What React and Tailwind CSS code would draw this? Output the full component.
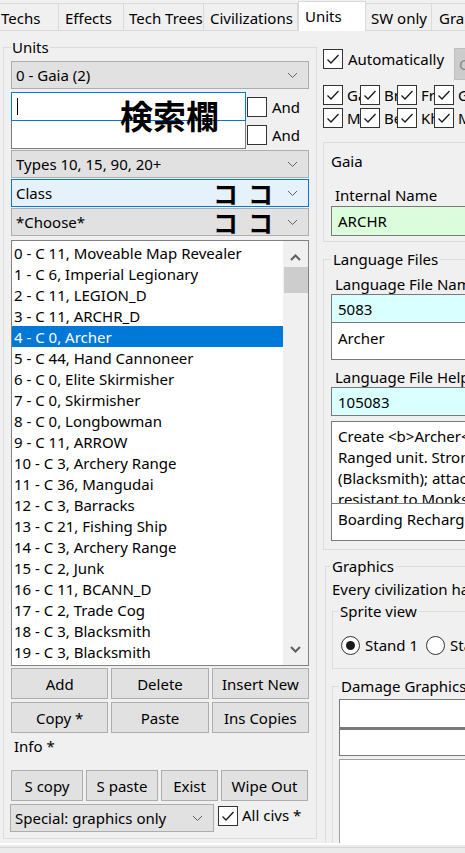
const units = [
  '0 - C 11, Moveable Map Revealer',
  '1 - C 6, Imperial Legionary',
  '2 - C 11, LEGION_D',
  '3 - C 11, ARCHR_D',
  '4 - C 0, Archer',
  '5 - C 44, Hand Cannoneer',
  '6 - C 0, Elite Skirmisher',
  '7 - C 0, Skirmisher',
  '8 - C 0, Longbowman',
  '9 - C 11, ARROW',
  '10 - C 3, Archery Range',
  '11 - C 36, Mangudai',
  '12 - C 3, Barracks',
  '13 - C 21, Fishing Ship',
  '14 - C 3, Archery Range',
  '15 - C 2, Junk',
  '16 - C 11, BCANN_D',
  '17 - C 2, Trade Cog',
  '18 - C 3, Blacksmith',
  '19 - C 3, Blacksmith',
];

const tabs = [
  { label: 'Techs', w: 'w-[61px]', pl: 'pl-[2px]' },
  { label: 'Effects', w: 'w-[66px]', pl: 'pl-[6px]' },
  { label: 'Tech Trees', w: 'w-[81px]', pl: 'pl-[5px]' },
  { label: 'Civilizations', w: 'w-[95px]', pl: 'pl-[6px]' },
  { label: 'Units', w: 'w-[68px]', pl: 'pl-[6px]', active: true },
  { label: 'SW only', w: 'w-[67px]', pl: 'pl-[5px]' },
  { label: 'Graphics', w: 'w-[80px]', pl: 'pl-[7px]' },
];

function Chevron() {
  return (
    <svg width="11" height="7" viewBox="0 0 11 7" className="shrink-0">
      <path d="M1 1 L5.5 5.5 L10 1" fill="none" stroke="#606060" strokeWidth="1" />
    </svg>
  );
}

function Check({ checked = true }) {
  return (
    <div className="w-[20px] h-[20px] shrink-0 border border-[#333333] bg-white flex items-center justify-center">
      {checked && (
        <svg width="16" height="16" viewBox="0 0 16 16">
          <path d="M2.5 8.5 L6 12 L13.5 4" fill="none" stroke="#1a1a1a" strokeWidth="1.3" />
        </svg>
      )}
    </div>
  );
}

function Select({ children, active, className = '' }) {
  return (
    <div
      className={`relative h-[28px] flex items-center justify-between pl-[4px] pr-[10px] border ${
        active ? 'bg-[#e5f1fb] border-[#0078d7]' : 'bg-[#e1e1e1] border-[#adadad]'
      } ${className}`}
    >
      <span className="whitespace-nowrap">{children}</span>
      <Chevron />
    </div>
  );
}

function Btn({ children, className = '' }) {
  return (
    <div className={`h-[31px] flex items-center justify-center bg-[#e1e1e1] border border-[#adadad] ${className}`}>
      {children}
    </div>
  );
}

function Note({ className = '' }) {
  return (
    <span
      className={`absolute font-bold text-[25px] leading-none tracking-[10px] text-black ${className}`}
      style={{ fontFamily: '"Noto Sans CJK JP", sans-serif' }}
    >
      ココ
    </span>
  );
}

export default function App() {
  return (
    <div
      className="w-[465px] h-[853px] overflow-hidden bg-[#f0f0f0] text-[15px] text-black leading-[20px]"
      style={{ fontFamily: '"Noto Sans", "Noto Sans CJK JP", sans-serif' }}
    >
      {/* Tabs */}
      <div className="h-[31px] flex items-end border-b border-[#d9d9d9] -ml-[1px] bg-[#f0f0f0]">
        {tabs.map(t => (
          <div
            key={t.label}
            className={`shrink-0 ${t.w} ${t.pl} flex items-center whitespace-nowrap border-t border-l border-r ${
              t.active
                ? 'h-[30px] -mb-px bg-white border-[#d9d9d9] pb-[2px]'
                : 'h-[27px] bg-[#f0f0f0] border-[#dadada] -ml-px pt-[1px]'
            }`}
          >
            {t.label}
          </div>
        ))}
      </div>

      {/* Body */}
      <div className="flex h-[812px]">
        {/* Left column */}
        <div className="w-[317px] shrink-0 pl-[3px]">
          <fieldset className="mt-[6px] h-[802px] border border-[#dcdcdc] px-[7px]">
            <legend className="px-[1px] leading-[20px]">Units</legend>

            <Select className="mt-[4px]">0 - Gaia (2)</Select>

            {/* Search */}
            <div className="relative mt-[3px] flex">
              <div className="w-[235px]">
                <div className="h-[29px] border border-[#0078d7] bg-white flex items-center pl-[5px]">
                  <div className="w-px h-[17px] bg-black" />
                </div>
                <div className="h-[28px] border border-t-0 border-[#7a7a7a] bg-white" />
              </div>
              <div className="ml-[1px] flex flex-col">
                <div className="h-[29px] flex items-center gap-[5px]">
                  <Check checked={false} />
                  <span>And</span>
                </div>
                <div className="h-[28px] flex items-center gap-[5px]">
                  <Check checked={false} />
                  <span>And</span>
                </div>
              </div>
              <span
                className="absolute left-[109px] top-[7px] font-bold text-[33px] leading-none text-black"
                style={{ fontFamily: '"Noto Sans CJK JP", serif' }}
              >
                検索欄
              </span>
            </div>

            <Select className="mt-px">Types 10, 15, 90, 20+</Select>
            <Select active className="mt-px">
              Class
              <Note className="left-[201px] top-[1px]" />
            </Select>
            <Select className="mt-px">
              *Choose*
              <Note className="left-[201px] top-[1px]" />
            </Select>

            {/* List */}
            <div className="mt-[4px] h-[426px] border border-[#828282] bg-white flex">
              <div className="flex-1 pt-px overflow-hidden">
                {units.map((u, i) => (
                  <div
                    key={u}
                    className={`h-[21px] flex items-center pl-[2px] whitespace-nowrap ${
                      i === 4 ? 'bg-[#0078d7] text-white' : ''
                    }`}
                  >
                    {u}
                  </div>
                ))}
              </div>
              <div className="w-[25px] bg-[#f0f0f0] flex flex-col items-center">
                <svg width="11" height="7" viewBox="0 0 11 7" className="mt-[13px]">
                  <path d="M1 6 L5.5 1.5 L10 6" fill="none" stroke="#606060" strokeWidth="2" />
                </svg>
                <div className="mt-[6px] w-[24px] h-[26px] bg-[#cdcdcd]" />
                <div className="flex-1" />
                <svg width="11" height="7" viewBox="0 0 11 7" className="mb-[12px]">
                  <path d="M1 1 L5.5 5.5 L10 1" fill="none" stroke="#606060" strokeWidth="2" />
                </svg>
              </div>
            </div>

            {/* Buttons */}
            <div className="mt-[2px] grid grid-cols-3 gap-[3px]">
              <Btn>Add</Btn>
              <Btn>Delete</Btn>
              <Btn>Insert New</Btn>
              <Btn>Copy *</Btn>
              <Btn>Paste</Btn>
              <Btn>Ins Copies</Btn>
            </div>
            <div className="h-[37px] pl-[3px] pt-[3px]">Info *</div>
            <div className="flex gap-[3px]">
              <Btn className="w-[72px]">S copy</Btn>
              <Btn className="w-[72px]">S paste</Btn>
              <Btn className="w-[57px]">Exist</Btn>
              <Btn className="w-[87px]">Wipe Out</Btn>
            </div>
            <div className="mt-[3px] -ml-px flex items-start">
              <Select className="w-[204px]">Special: graphics only</Select>
              <div className="ml-[4px] mt-[2px] flex items-center gap-[4px]">
                <Check />
                <span className="-mt-[3px] whitespace-nowrap">All civs *</span>
              </div>
            </div>
          </fieldset>
        </div>

        {/* Right column */}
        <div className="flex-1 overflow-hidden pl-[6px]">
          <div className="w-[320px]">
            <div className="mt-[17px] flex items-start">
              <div className="mt-[1px]">
                <Check />
              </div>
              <span className="ml-[5px] w-[106px] mt-[1px]">Automatically</span>
              <div className="w-[60px] h-[32px] bg-[#cccccc] border border-[#bfbfbf] flex items-center pl-[4px] text-[#8a8a8a]">
                Copy
              </div>
            </div>

            {[['Gaia', 'Britons', 'Franks', 'Goths'], ['Mongols', 'Berbers', 'Khmer', 'Malay']].map((row, r) => (
              <div key={r} className={`flex ${r === 0 ? 'mt-[5px]' : 'mt-[3px]'}`}>
                {row.map(c => (
                  <div key={c} className="w-[37px] shrink-0 overflow-hidden flex items-center">
                    <Check />
                    <span className="ml-[4px] w-[13px] shrink-0 overflow-hidden whitespace-nowrap">{c}</span>
                  </div>
                ))}
              </div>
            ))}

            {/* Gaia box */}
            <div className="mt-[14px] h-[100px] border border-[#dcdcdc] pl-[7px] pt-[8px]">
              <div>Gaia</div>
              <div className="mt-[14px] ml-[4px]">Internal Name</div>
              <div className="h-[30px] mt-px border border-[#7a7a7a] bg-[#dcfddc] flex items-center pl-[6px]">ARCHR</div>
            </div>

            {/* Language Files */}
            <fieldset className="mt-[7px] border border-[#dcdcdc] pl-[7px] pb-[8px]">
              <legend className="px-[2px]">Language Files</legend>
              <div className="mt-[5px] ml-[4px] whitespace-nowrap">Language File Name</div>
              <div className="h-[29px] border border-[#7a7a7a] bg-[#d9ffff] flex items-center pl-[6px]">5083</div>
              <div className="h-[37px] border border-t-0 border-[#7a7a7a] bg-white pl-[6px] pt-[5px]">Archer</div>
              <div className="mt-[7px] ml-[4px] whitespace-nowrap">Language File Help</div>
              <div className="h-[29px] border border-[#7a7a7a] bg-[#d9ffff] flex items-center pl-[6px]">105083</div>
              <div className="mt-[5px] h-[83px] overflow-hidden border border-[#7a7a7a] bg-white pl-[6px] pt-[4px] leading-[21px] whitespace-nowrap">
                <div>Create &lt;b&gt;Archer&lt;/b&gt; (&lt;cost&gt;)</div>
                <div>Ranged unit. Strong vs. infantry.</div>
                <div>(Blacksmith); attack and armor</div>
                <div>resistant to Monks</div>
              </div>
              <div className="h-[37px] border border-t-0 border-[#7a7a7a] bg-white pl-[6px] pt-[5px] whitespace-nowrap">
                Boarding Recharge
              </div>
            </fieldset>

            {/* Graphics */}
            <fieldset className="mt-[6px] ml-[2px] border border-[#dcdcdc] pl-[6px] h-[300px]">
              <legend className="-ml-[2px] px-[2px]">Graphics</legend>
              <div className="mt-[3px] whitespace-nowrap">Every civilization has its own graphics</div>
              <fieldset className="mt-[2px] border border-[#dcdcdc] pb-[13px]">
                <legend className="ml-[5px] px-[2px]">Sprite view</legend>
                <div className="mt-[14px] ml-[8px] flex items-center">
                  <div className="w-[19px] h-[19px] rounded-full border border-[#333333] bg-white flex items-center justify-center">
                    <div className="w-[9px] h-[9px] rounded-full bg-[#1a1a1a]" />
                  </div>
                  <span className="ml-[5px]">Stand 1</span>
                  <div className="ml-[8px] w-[19px] h-[19px] rounded-full border border-[#333333] bg-white" />
                  <span className="ml-[5px]">Stand 2</span>
                </div>
              </fieldset>
              <fieldset className="mt-[7px] border border-[#dcdcdc] pl-[6px] h-[200px]">
                <legend className="px-[2px]">Damage Graphics</legend>
                <div className="mt-[3px] h-[29px] border border-[#7a7a7a] bg-white" />
                <div className="h-[28px] border border-t-[2px] border-[#7a7a7a] bg-white" />
                <div className="mt-[3px] h-[100px] border border-[#a0a0a0] bg-white" />
              </fieldset>
            </fieldset>
          </div>
        </div>
      </div>

      {/* Bottom strip */}
      <div className="h-[10px] border-t-[2px] border-white bg-[#ebebeb]">
        <div className="mt-[2px] h-px bg-[#d4d4d4]" />
      </div>
    </div>
  );
}
